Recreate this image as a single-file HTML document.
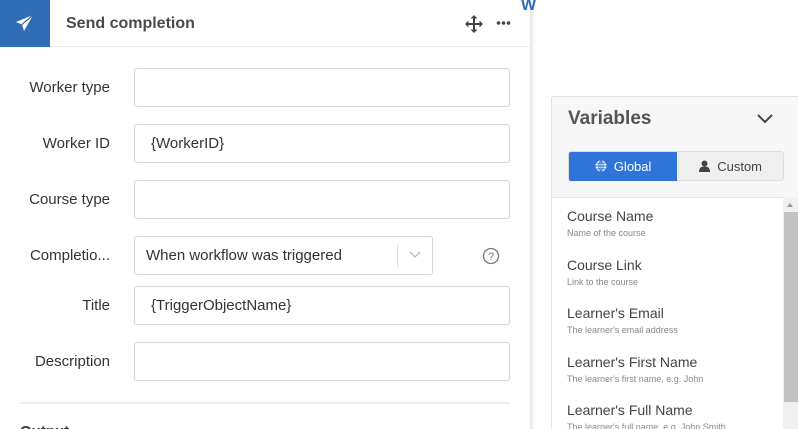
<!DOCTYPE html>
<html><head><style>
*{box-sizing:border-box;margin:0;padding:0}
html,body{width:798px;height:429px;overflow:hidden}
body{background:#fff;font-family:"Liberation Sans",sans-serif;position:relative}
.left{position:absolute;left:0;top:0;width:530px;height:440px;background:#fff;box-shadow:2px 0 4px rgba(0,0,0,.12)}
.hdr{position:absolute;left:0;top:0;width:530px;height:47px;border-bottom:1px solid #eee}
.blue{position:absolute;left:0;top:0;width:50px;height:47px;background:#2f6db5}
.title{position:absolute;left:66px;top:15px;font-size:16px;color:#4a4a4a;font-weight:bold}
.lbl{position:absolute;width:110px;text-align:right;font-size:15px;color:#333}
.inp{position:absolute;left:134px;width:376px;height:39px;border:1px solid #d6d6d6;border-radius:3px;font-size:15px;color:#333;padding:10px 16px}
.w{position:absolute;left:521px;top:-3px;font-size:16px;font-weight:bold;color:#2f6db5}
.var{position:absolute;left:551px;top:96px;width:260px;height:340px;background:#f7f7f7;border:1px solid #e2e2e2;border-radius:3px}
.vt{position:absolute;left:16px;top:11px;font-size:19px;color:#555;font-weight:bold}
.tabs{position:absolute;left:16px;top:54px;width:216px;height:30px;border:1px solid #ddd;border-radius:3px;background:#efefef;font-size:13px}
.tg{position:absolute;left:0;top:0;width:108px;height:29px;background:#2f74d9;color:#fff;border-radius:2px 0 0 2px;text-align:center;line-height:29px}
.tc{position:absolute;left:108px;top:0;width:107px;height:29px;color:#444;text-align:center;line-height:29px}
.list{position:absolute;left:0;top:100px;width:232px;height:240px;background:#fff;border-top:1px solid #e5e5e5}
.it{position:absolute;left:15px;font-size:14px;color:#444}
.it small{display:block;font-size:9px;color:#888;margin-top:4px}
.sb{position:absolute;left:783px;top:197px;width:15px;height:232px;background:#f0f0f0}
.th{position:absolute;left:784px;top:212px;width:14px;height:190px;background:#c1c1c1}
</style></head><body>
<div class="left">
 <div class="hdr">
  <div class="blue"><svg width="50" height="47" viewBox="0 0 50 47"><path d="M33 15 L16 22 L22 24.5 L24 31 Z" fill="#fff"/><path d="M33 15 L22 24.5" stroke="#2f6db5" stroke-width="1.2"/></svg></div>
  <div class="title">Send completion</div>
  <svg style="position:absolute;left:465px;top:15px" width="18" height="18" viewBox="0 0 18 18"><path d="M9 2v14M2 9h14" stroke="#444" stroke-width="2"/><path d="M9 0l-3.5 3.5h7zM9 18l-3.5-3.5h7zM0 9l3.5-3.5v7zM18 9l-3.5-3.5v7z" fill="#444"/></svg>
  <svg style="position:absolute;left:496px;top:20px" width="16" height="6"><circle cx="2.5" cy="3" r="1.8" fill="#444"/><circle cx="7.5" cy="3" r="1.8" fill="#444"/><circle cx="12.5" cy="3" r="1.8" fill="#444"/></svg>
 </div>
 <div class="lbl" style="top:79px">Worker type</div><div class="inp" style="top:68px"></div>
 <div class="lbl" style="top:135px">Worker ID</div><div class="inp" style="top:124px">{WorkerID}</div>
 <div class="lbl" style="top:191px">Course type</div><div class="inp" style="top:180px"></div>
 <div class="lbl" style="top:247px">Completio...</div><div class="inp" style="top:236px;width:299px;padding-left:11px">When workflow was triggered<div style="position:absolute;left:262px;top:7px;width:1px;height:23px;background:#ddd"></div><svg style="position:absolute;left:274px;top:14px" width="12" height="8"><path d="M1 1l5 5 5-5" stroke="#bbb" fill="none" stroke-width="1.3"/></svg></div>
 <svg style="position:absolute;left:482px;top:247px" width="18" height="18"><circle cx="9" cy="9" r="7.5" stroke="#777" stroke-width="1.3" fill="none"/><text x="9" y="13" font-size="11" text-anchor="middle" fill="#777" font-family="Liberation Sans">?</text></svg>
 <div class="lbl" style="top:297px">Title</div><div class="inp" style="top:286px">{TriggerObjectName}</div>
 <div class="lbl" style="top:353px">Description</div><div class="inp" style="top:342px"></div>
 <div style="position:absolute;left:20px;top:402px;width:490px;height:2px;background:#eee"></div>
 <div style="position:absolute;left:20px;top:423px;font-size:15px;font-weight:bold;color:#333">Output</div>
</div>
<div class="w">W</div>
<div class="var">
 <div class="vt">Variables</div>
 <svg style="position:absolute;left:204px;top:16px" width="18" height="12"><path d="M2 2l7 7 7-7" stroke="#444" stroke-width="2" fill="none"/></svg>
 <div class="tabs"><div class="tg"><svg width="12" height="12" viewBox="0 0 12 12" style="vertical-align:-1px"><circle cx="6" cy="6" r="5.5" fill="#fff"/><path d="M0.5 6h11M6 .5v11M6 .5c-3 3-3 8 0 11M6 .5c3 3 3 8 0 11M1.5 3.2h9M1.5 8.8h9" stroke="#2f74d9" stroke-width="0.9" fill="none"/></svg>&nbsp; Global</div><div class="tc"><svg width="11" height="12" style="vertical-align:-1px"><circle cx="5.5" cy="3.5" r="3" fill="#444"/><path d="M0 12c0-4 2-5.5 5.5-5.5S11 8 11 12z" fill="#444"/></svg>&nbsp; Custom</div></div>
 <div class="list">
  <div class="it" style="top:10px">Course Name<small>Name of the course</small></div>
  <div class="it" style="top:59px">Course Link<small>Link to the course</small></div>
  <div class="it" style="top:107px">Learner's Email<small>The learner's email address</small></div>
  <div class="it" style="top:156px">Learner's First Name<small>The learner's first name, e.g. John</small></div>
  <div class="it" style="top:204px">Learner's Full Name<small>The learner's full name, e.g. John Smith</small></div>
 </div>
</div>
<div class="sb"></div><div class="th"></div>
<svg style="position:absolute;left:786px;top:202px" width="8" height="6"><path d="M4 1l3 4H1z" fill="#999"/></svg>
</body></html>
